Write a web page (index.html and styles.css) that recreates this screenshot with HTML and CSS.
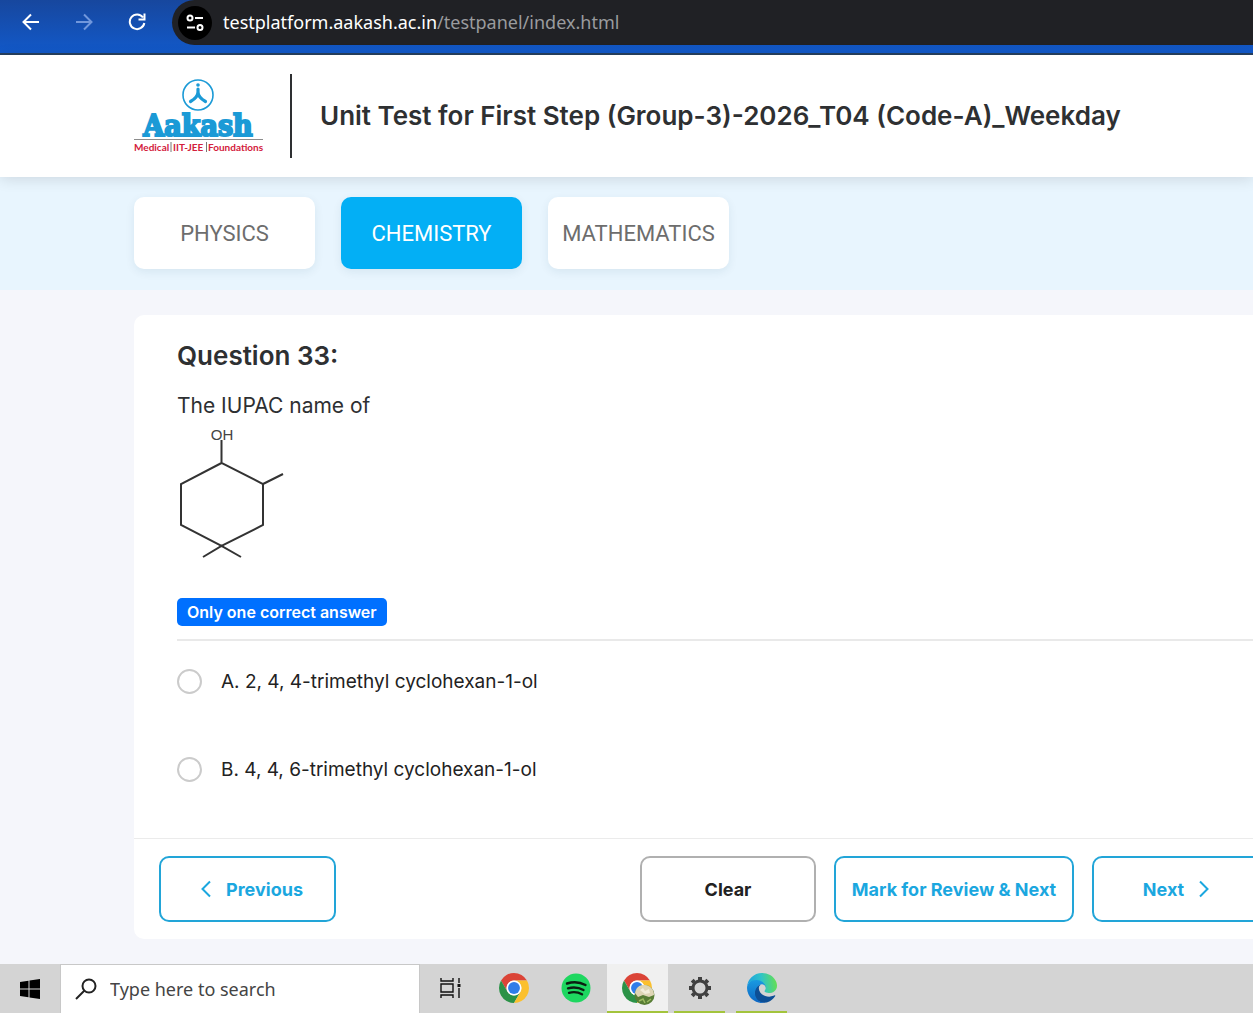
FILE: index.html
```html
<!DOCTYPE html>
<html lang="en">
<head>
    <meta charset="UTF-8">
    <meta name="viewport" content="width=device-width, initial-scale=1.0">
    <title>Unit Test for First Step</title>
    <link rel="stylesheet" href="styles.css">
</head>
<body>
    <div class="browser-bar">
        <button class="nav-btn" aria-label="Back">
            <svg width="18" height="18" viewBox="0 0 18 18"><path d="M17 9H2M9 1.500L1.500 9L9 16.500"/></svg>
        </button>
        <button class="nav-btn disabled" aria-label="Forward" disabled>
            <svg width="18" height="18" viewBox="0 0 18 18"><path d="M1 9H16M9 1.500L16.500 9L9 16.500"/></svg>
        </button>
        <button class="nav-btn" aria-label="Reload">
            <svg width="18" height="18" viewBox="0 0 18 18"><path d="M15 4.500A7.300 7.300 0 1 0 16.300 10M16.500 0.500V6.500H10.500"/></svg>
        </button>
        <div class="address">
            <button class="site-info" aria-label="Site information">
                <svg width="18" height="18" viewBox="0 0 18 18"><circle cx="4" cy="4" r="2.500"/><path d="M9 4H17M1 13.500H9"/><circle cx="14" cy="13.500" r="2.500"/></svg>
            </button>
            <span class="url">testplatform.aakash.ac.in<span>/testpanel/index.html</span></span>
        </div>
    </div>

    <header class="header">
        <svg class="logo" width="130" height="76" viewBox="0 0 130 76" role="img" aria-label="Aakash">
            <circle cx="64" cy="17" r="15" fill="none" stroke="#1b9ad6" stroke-width="1.600"/>
            <circle cx="64" cy="7" r="1.800" fill="#1b9ad6"/>
            <path d="M64 11V14C64 18 60 21.500 56.500 23.500M64 14C64 18 68 21.500 71.500 23.500" fill="none" stroke="#1b9ad6" stroke-width="3.200" stroke-linecap="round"/>
            <text class="logo-name" x="64" y="58" text-anchor="middle">Aakash</text>
            <path d="M0 61.500H129" stroke="#8c8c8c" stroke-width="1"/>
            <text class="logo-sub" x="0" y="73">Medical</text>
            <text class="logo-sub" x="39" y="73">IIT-JEE</text>
            <text class="logo-sub" x="74" y="73">Foundations</text>
            <path d="M37 64V74M72.500 64V74" stroke="#777" stroke-width="1"/>
        </svg>
        <h1>Unit Test for First Step (Group-3)-2026_T04 (Code-A)_Weekday</h1>
    </header>

    <nav class="subjects">
        <button class="subject">PHYSICS</button>
        <button class="subject active">CHEMISTRY</button>
        <button class="subject">MATHEMATICS</button>
    </nav>

    <main>
        <div class="card">
            <div class="question">
                <h2>Question 33:</h2>
                <p>The IUPAC name of</p>
                <svg class="molecule" width="110" height="135" viewBox="0 0 110 135">
                    <text x="45" y="14" text-anchor="middle">OH</text>
                    <path d="M44.500 14V37L86 58V99L44.500 120L4 99V58L44.500 37M86 58L106 48M64 131L44.500 120L26 131"/>
                </svg>
                <span class="badge">Only one correct answer</span>
                <div class="options">
                    <label class="option"><input type="radio" name="answer"> A. 2, 4, 4-trimethyl cyclohexan-1-ol</label>
                    <label class="option"><input type="radio" name="answer"> B. 4, 4, 6-trimethyl cyclohexan-1-ol</label>
                </div>
            </div>
            <div class="actions">
                <button class="btn prev">
                    <svg width="12" height="18" viewBox="0 0 12 18"><path d="M10 1.500L2.500 9L10 16.500"/></svg>
                    Previous
                </button>
                <button class="btn clear">Clear</button>
                <button class="btn review">Mark for Review &amp; Next</button>
                <button class="btn next">
                    Next
                    <svg width="12" height="18" viewBox="0 0 12 18"><path d="M2 1.500L9.500 9L2 16.500"/></svg>
                </button>
            </div>
        </div>
    </main>

    <footer class="taskbar">
        <button class="start" aria-label="Start">
            <svg width="20" height="20" viewBox="0 0 20 20"><path d="M0 3L8.500 1.800V9.500H0ZM9.500 1.600L20 0V9.500H9.500ZM0 10.500H8.500V18.200L0 17ZM9.500 10.500H20V20L9.500 18.400Z"/></svg>
        </button>
        <div class="search">
            <svg width="22" height="22" viewBox="0 0 22 22"><circle cx="14" cy="8" r="6.500"/><path d="M9.500 12.500L1 21"/></svg>
            <input type="text" placeholder="Type here to search" aria-label="Search">
        </div>
        <div class="apps">
            <button class="app task-view" aria-label="Task view">
                <svg width="22" height="22" viewBox="0 0 22 22" fill="none" stroke="#111" stroke-width="1.400"><path d="M2 1V4H14V1M2 21V18H14V21M2 7H14V15H2ZM20 1V6M20 11V21"/><path d="M18.500 8.500H21.500" stroke-width="3"/></svg>
            </button>
            <button class="app" aria-label="Chrome">
                <svg width="30" height="30" viewBox="0 0 48 48">
                    <g id="chrome">
                        <path fill="#db4437" d="M44.780 12A24 24 0 0 0 3.220 12L13.610 30A12 12 0 0 1 24 12Z"/>
                        <path fill="#2b9247" d="M3.220 12A24 24 0 0 0 24 48L34.390 30A12 12 0 0 1 13.610 30Z"/>
                        <path fill="#fbc02d" d="M24 48A24 24 0 0 0 44.780 12H24A12 12 0 0 1 34.390 30Z"/>
                        <circle cx="24" cy="24" r="12" fill="#fff"/>
                        <circle cx="24" cy="24" r="9.500" fill="#2f7de9"/>
                    </g>
                </svg>
            </button>
            <button class="app" aria-label="Spotify">
                <svg width="30" height="30" viewBox="0 0 30 30"><circle cx="15" cy="15" r="14.500" fill="#1ed760"/><path d="M6 10.500C12 8.500 19 9 24.500 12M7 15.300C12 14 18 14.500 22.500 17M8 19.800C12 18.800 17 19 21 21.300" fill="none" stroke="#0c1f12" stroke-width="2.400" stroke-linecap="round"/></svg>
            </button>
            <button class="app running current" aria-label="Chrome profile">
                <svg width="34" height="34" viewBox="0 0 34 34">
                    <svg x="1" y="2" width="30" height="30" viewBox="0 0 48 48"><use href="#chrome"/></svg>
                    <circle cx="23.500" cy="24" r="10" fill="#587d35"/>
                    <path d="M14 22C15 16 19 13.500 24 14C29 14.500 33 18 33 24L28 26L22 24L17 26Z" fill="#ded5b5"/>
                    <path d="M19 19L22 17L24 20L28 18L29 22L24 23Z" fill="#f3edda"/>
                    <path d="M18 30L22 28L24 32M26 31L30 28" fill="none" stroke="#9dbb62" stroke-width="1.500"/>
                </svg>
            </button>
            <button class="app running" aria-label="Settings">
                <svg width="24" height="24" viewBox="0 0 24 24" fill="none" stroke="#404040">
                    <circle cx="12" cy="12" r="7" stroke-width="3"/>
                    <path d="M12 1V4M12 20V23M1 12H4M20 12H23M4.200 4.200L6.300 6.300M17.700 17.700L19.800 19.800M4.200 19.800L6.300 17.700M17.700 6.300L19.800 4.200" stroke-width="4"/>
                </svg>
            </button>
            <button class="app running" aria-label="Edge">
                <svg width="30" height="30" viewBox="0 0 256 256">
                    <defs>
                        <linearGradient id="edge-green" x1="0" y1="0.500" x2="1" y2="0.400"><stop offset="0" stop-color="#1b9fe0"/><stop offset="0.500" stop-color="#2fc3c8"/><stop offset="1" stop-color="#66e04f"/></linearGradient>
                        <linearGradient id="edge-blue" x1="0.500" y1="0" x2="0.500" y2="1"><stop offset="0" stop-color="#1b9de2"/><stop offset="1" stop-color="#0c66c4"/></linearGradient>
                    </defs>
                    <path fill="#0d4f96" d="M235.680 190.480a93.730 93.730 0 0 1-10.540 4.710 101.870 101.870 0 0 1-35.900 6.460c-47.320 0-88.540-32.550-88.540-74.320A31.480 31.480 0 0 1 117.130 99.920c-42.800 1.800-53.800 46.400-53.800 72.530 0 73.880 68.090 81.370 82.760 81.370 7.910 0 19.840-2.300 27-4.560l1.310-.44a128.340 128.340 0 0 0 66.600-52.800 4 4 0 0 0-5.320-5.540z"/>
                    <path fill="url(#edge-blue)" d="M105.730 241.420a79.200 79.200 0 0 1-22.740-21.340 80.720 80.720 0 0 1 29.530-120c3.120-1.470 8.450-4.130 15.540-4a32.350 32.350 0 0 1 25.690 13 31.880 31.880 0 0 1 6.360 18.660c0-.21 24.460-79.600-80-79.600-43.900 0-80 41.660-80 78.210a130.150 130.150 0 0 0 12.110 56 128 128 0 0 0 156.380 67.110 75.550 75.550 0 0 1-62.780-8z"/>
                    <path fill="url(#edge-green)" d="M152.330 148.860c-.81 1.050-3.300 2.500-3.300 5.660 0 2.610 1.700 5.120 4.720 7.230 14.380 10 41.490 8.680 41.560 8.680a59.560 59.560 0 0 0 30.270-8.350A61.380 61.380 0 0 0 256 109.170c.26-22.410-8-37.310-11.340-43.910C223.460 23.840 177.720 0 128 0A128 128 0 0 0 0 126.200c.48-36.540 36.800-66.050 80-66.050 3.500 0 23.460.34 42 10.070 16.340 8.580 24.900 18.940 30.850 29.210 6.180 10.670 7.280 24.150 7.280 29.520s-2.740 13.330-7.800 19.910z"/>
                </svg>
            </button>
        </div>
    </footer>
</body>
</html>
```
FILE: styles.css
```css
* {
    box-sizing: border-box;
}

body {
    display: flex;
    flex-direction: column;
    min-height: 100vh;
    margin: 0;
    font-family: Inter, "Liberation Sans", sans-serif;
    color: #2e3032;
    background-color: #f5f6fb;
    overflow-x: hidden;
}

button {
    padding: 0;
    border: none;
    background: none;
    font-family: inherit;
    cursor: pointer;
}

svg {
    display: block;
    flex-shrink: 0;
}

/* browser */
.browser-bar {
    display: flex;
    align-items: flex-start;
    gap: 12px;
    height: 55px;
    padding-left: 10px;
    border-bottom: 2px solid #27405f;
    background: linear-gradient(#17479e, #1259c9);
}

.nav-btn {
    display: flex;
    align-items: center;
    justify-content: center;
    width: 41px;
    height: 43px;
}

.nav-btn svg,
.site-info svg {
    fill: none;
    stroke: #fff;
    stroke-width: 2;
}

.nav-btn.disabled svg {
    stroke: #7197dc;
}

.address {
    display: flex;
    flex: 1;
    align-items: center;
    gap: 11px;
    height: 45px;
    margin-left: 3px;
    padding-left: 6px;
    border-radius: 23px 0 0 23px;
    background-color: #202125;
}

.site-info {
    display: flex;
    align-items: center;
    justify-content: center;
    width: 34px;
    height: 34px;
    border-radius: 50%;
    background-color: #000;
}

.url {
    font-family: "Noto Sans", sans-serif;
    font-size: 18px;
    line-height: 43px;
    color: #fff;
}

.url span {
    color: #9a9b9e;
}

/* page header */
.header {
    position: relative;
    display: flex;
    align-items: center;
    height: 122px;
    padding-left: 134px;
    background-color: #fff;
    box-shadow: 0 2px 14px rgba(0, 0, 0, 0.12);
}

.logo-name {
    font: bold 30px "DejaVu Serif Condensed", "DejaVu Serif", serif;
    fill: #1b9ad6;
    stroke: #1b9ad6;
    stroke-width: 2px;
}

.logo-sub {
    font: bold 10px Lato, sans-serif;
    fill: #d3203c;
}

.header h1 {
    margin: 0 0 0 26px;
    padding-left: 28px;
    border-left: 2px solid #2e3032;
    font-size: 26px;
    font-weight: 600;
    line-height: 84px;
    white-space: nowrap;
}

.subjects {
    display: flex;
    gap: 26px;
    padding: 20px 0 21px 134px;
    background-color: #e8f5fe;
}

.subject {
    width: 181px;
    height: 72px;
    border-radius: 10px;
    background-color: #fff;
    box-shadow: 0 3px 10px rgba(0, 60, 90, 0.08);
    font-family: Roboto, sans-serif;
    font-size: 22px;
    color: #6d6d6d;
}

.subject.active {
    background-color: #03aff5;
    color: #fff;
}

/* question card, runs past the right edge of the window */
main {
    display: flex;
    flex: 1;
    padding: 25px 0 25px 134px;
    overflow: hidden;
}

.card {
    display: flex;
    flex: 1;
    flex-direction: column;
    margin-right: -41px;
    border-radius: 10px;
    background-color: #fff;
}

.question {
    flex: 1;
    padding: 24px 0 55px 43px;
}

.question h2 {
    margin: 0 0 18px;
    font-size: 26px;
    font-weight: 600;
    line-height: 34px;
}

.question p {
    margin: 0 0 5px;
    font-size: 21px;
    line-height: 30px;
}

.molecule {
    margin-bottom: 37px;
}

.molecule text {
    font: 15px "Liberation Sans", sans-serif;
    fill: #444;
}

.molecule path {
    fill: none;
    stroke: #333;
    stroke-width: 2;
}

.badge {
    display: block;
    width: fit-content;
    padding: 0 10px;
    border-radius: 5px;
    background-color: #0070ff;
    font-size: 16px;
    font-weight: 600;
    line-height: 28px;
    color: #fff;
}

.options {
    display: flex;
    flex-direction: column;
    gap: 63px;
    margin-top: 13px;
    padding-top: 28px;
    border-top: 2px solid #e9e9e9;
}

.option {
    display: flex;
    align-items: center;
    gap: 19px;
    font-size: 19px;
    line-height: 25px;
    color: #222;
}

.option input {
    width: 25px;
    height: 25px;
    margin: 0;
    border: 2px solid #cbcbcb;
    border-radius: 50%;
    appearance: none;
}

.option input:checked {
    border: 7px solid #1fa5dc;
}

.actions {
    display: flex;
    gap: 18px;
    padding: 17px 25px;
    border-top: 1px solid #ebebeb;
}

.btn {
    display: flex;
    align-items: center;
    justify-content: center;
    gap: 14px;
    width: 177px;
    height: 66px;
    border: 2px solid #22a5d8;
    border-radius: 10px;
    font-size: 18px;
    font-weight: bold;
    color: #1ba7df;
}

.btn svg {
    fill: none;
    stroke: #1ba7df;
    stroke-width: 2;
}

.btn.prev {
    margin-right: auto;
    padding-left: 8px;
}

.btn.next {
    padding-right: 8px;
}

.btn.clear {
    width: 176px;
    border-color: #b0b0b0;
    color: #222;
}

.btn.review {
    width: 240px;
}

/* taskbar */
.taskbar {
    display: flex;
    height: 49px;
    background-color: #d4d4d4;
}

.start {
    display: flex;
    align-items: center;
    justify-content: center;
    width: 60px;
}

.search {
    display: flex;
    align-items: center;
    gap: 13px;
    width: 360px;
    padding-left: 14px;
    border: 1px solid #c8c8c8;
    border-bottom: none;
    background-color: #fff;
}

.search svg {
    fill: none;
    stroke: #222;
    stroke-width: 2;
}

.search input {
    flex: 1;
    min-width: 0;
    padding: 0;
    border: none;
    outline: none;
    font-family: "Noto Sans", sans-serif;
    font-size: 18px;
}

.search input::placeholder {
    color: #444;
}

.apps {
    display: flex;
    gap: 11px;
    padding-left: 2px;
}

.app {
    display: flex;
    align-items: center;
    justify-content: center;
    width: 51px;
    border-bottom: 2px solid transparent;
}

.app.task-view {
    width: 55px;
}

.app.running {
    border-color: #a3c43c;
}

.app.current {
    width: 61px;
    margin: 0 -5px;
    background-color: #f0f0f0;
}
```
